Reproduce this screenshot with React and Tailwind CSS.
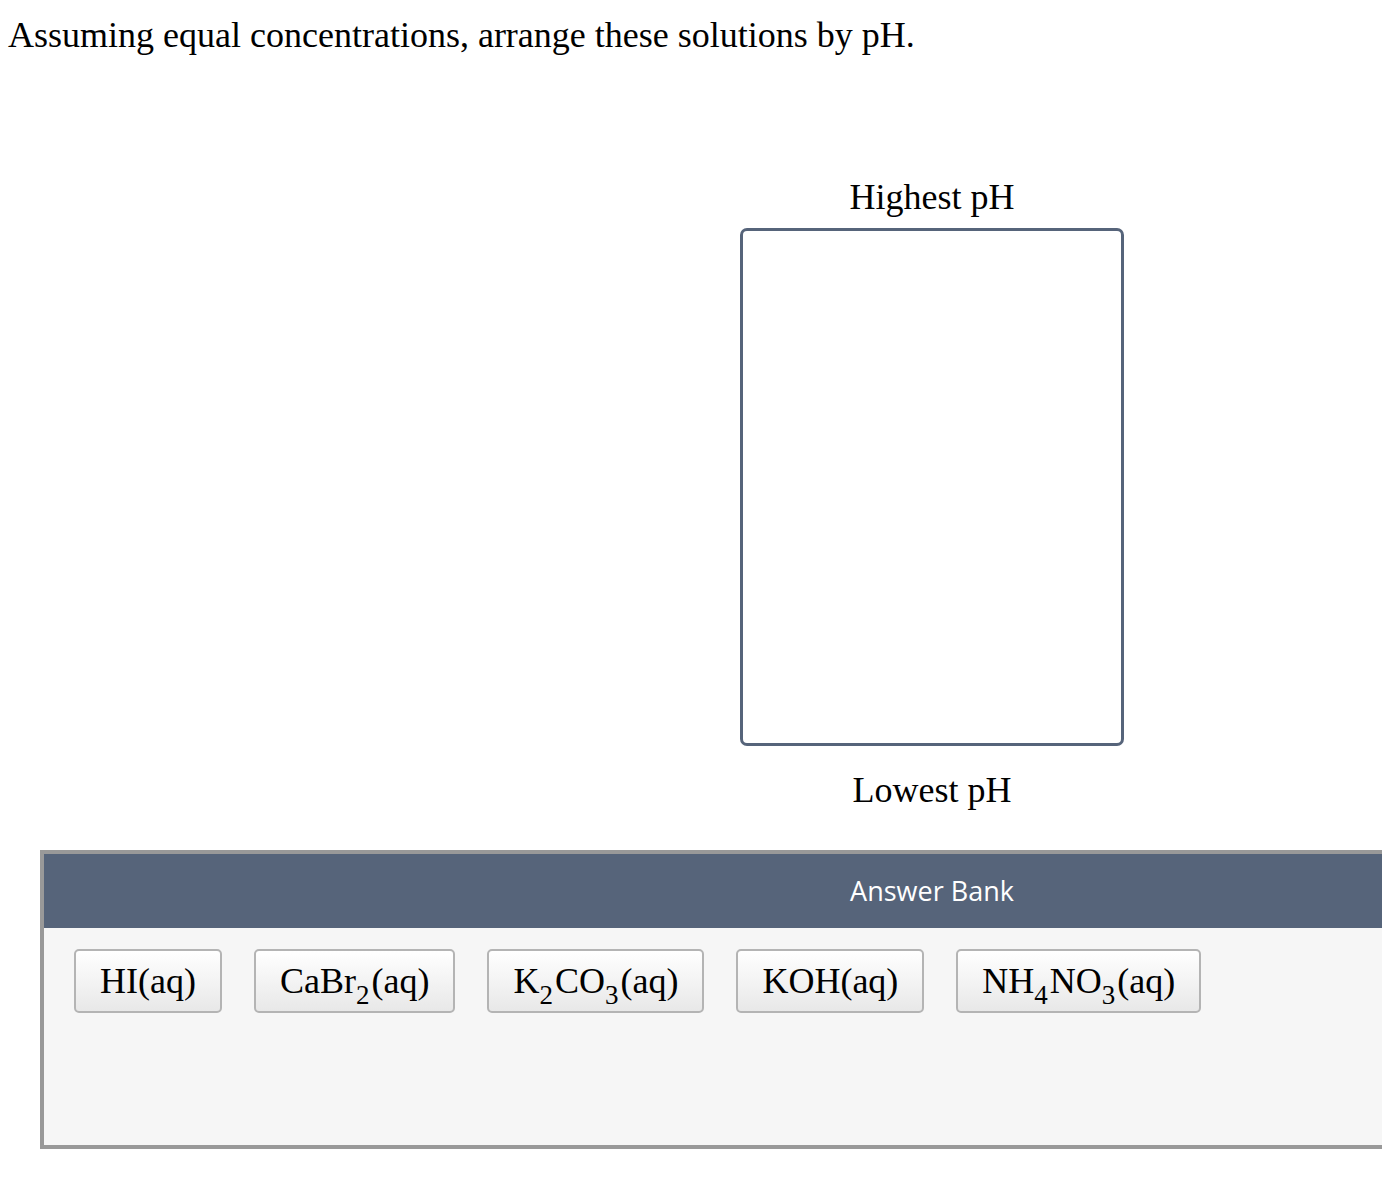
const serif = { fontFamily: '"Liberation Serif", "Times New Roman", serif' };

// chemical subscript, dropped below the baseline
function Sub({ children }) {
  return <span className="relative top-[11px] mr-[2px] text-[27px] leading-none">{children}</span>;
}

const solutions = [
  { key: "hi", label: <>HI(aq)</> },
  { key: "cabr2", label: <>CaBr<Sub>2</Sub>(aq)</> },
  { key: "k2co3", label: <>K<Sub>2</Sub>CO<Sub>3</Sub>(aq)</> },
  { key: "koh", label: <>KOH(aq)</> },
  { key: "nh4no3", label: <>NH<Sub>4</Sub>NO<Sub>3</Sub>(aq)</> },
];

function Chip({ children }) {
  return (
    <div className="flex h-[64px] items-center rounded-[5px] border-2 border-[#b4b4b4] bg-gradient-to-b from-white to-[#e8e8e8] px-[24px] text-[36px] leading-[40px] text-black">
      <span className="whitespace-nowrap">{children}</span>
    </div>
  );
}

export default function App() {
  return (
    <div className="min-h-[1188px] w-[1382px] overflow-hidden bg-white text-black" style={serif}>
      <p className="pl-[8px] pt-[15px] text-[36px] leading-[40px]">
        Assuming equal concentrations, arrange these solutions by pH.
      </p>

      {/* ranking column */}
      <div className="ml-[740px] mt-[122px] flex w-[384px] flex-col items-center">
        <div className="text-[36px] leading-[40px]">Highest pH</div>
        <div className="mt-[11px] h-[518px] w-full rounded-[7px] border-[3px] border-[#56647a]" />
        <div className="mt-[24px] text-[36px] leading-[40px]">Lowest pH</div>
      </div>

      {/* answer bank */}
      <div className="ml-[40px] mt-[40px] w-[1784px] border-4 border-[#999999] bg-[#f6f6f6]">
        <div
          className="flex h-[74px] items-center justify-center bg-[#56647a] text-[27px] text-white"
          style={{ fontFamily: '"Open Sans", "Noto Sans", sans-serif' }}
        >
          Answer Bank
        </div>
        <div className="flex h-[217px] items-start gap-[32px] pl-[30px] pt-[21px]">
          {solutions.map((s) => (
            <Chip key={s.key}>{s.label}</Chip>
          ))}
        </div>
      </div>
    </div>
  );
}
